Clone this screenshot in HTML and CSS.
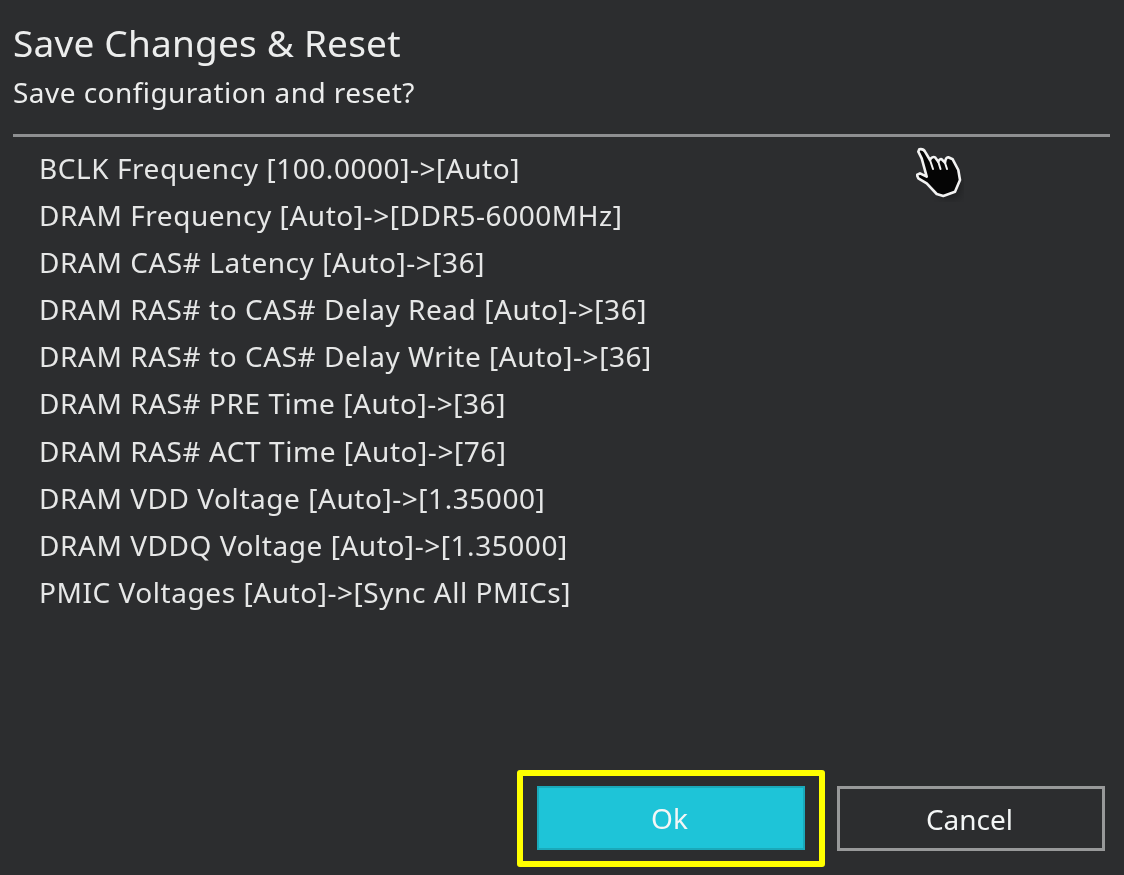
FILE: index.html
```html
<!DOCTYPE html>
<html lang="en">
<head>
<meta charset="utf-8">
<title>Save Changes &amp; Reset</title>
<link rel="stylesheet" href="styles.css">
</head>
<body>
<main class="dialog">
  <header class="head">
    <h1 class="title">Save Changes &amp; Reset</h1>
    <p class="subtitle">Save configuration and reset?</p>
  </header>
  <ul class="changes">
    <li>BCLK Frequency [100.0000]-&gt;[Auto]</li>
    <li>DRAM Frequency [Auto]-&gt;[DDR5-6000MHz]</li>
    <li>DRAM CAS# Latency [Auto]-&gt;[36]</li>
    <li>DRAM RAS# to CAS# Delay Read [Auto]-&gt;[36]</li>
    <li>DRAM RAS# to CAS# Delay Write [Auto]-&gt;[36]</li>
    <li>DRAM RAS# PRE Time [Auto]-&gt;[36]</li>
    <li>DRAM RAS# ACT Time [Auto]-&gt;[76]</li>
    <li>DRAM VDD Voltage [Auto]-&gt;[1.35000]</li>
    <li>DRAM VDDQ Voltage [Auto]-&gt;[1.35000]</li>
    <li>PMIC Voltages [Auto]-&gt;[Sync All PMICs]</li>
  </ul>
  <footer class="actions">
    <div class="highlight"><button class="btn btn-ok">Ok</button></div>
    <button class="btn btn-cancel">Cancel</button>
  </footer>
  <svg class="cursor" width="48" height="56" viewBox="0 0 48 56" aria-hidden="true">
    <path class="cursor-shadow" d="M12 24 L26 52 L42 52 L47 34 Z"/>
    <path class="cursor-hand" d="M3.3 3.3 C6 2.8 8 3.8 9 5.7 L14 14 C15 11.5 17.5 10.5 19 11.3 L22.3 15.7 C23 13.5 24.5 12.8 25.7 13.3 L29 16.7 C29.5 12.5 31 11 32.3 11.3 L36.7 13.3 L42.3 24 L44 34 L39 45.7 L27.3 50 L20.7 48 L10.7 37.3 L2.3 32.3 L0.9 29 L4 27.3 L10.7 30.7 L5.7 12.3 L2.3 5.7 Z"/>
    <path class="cursor-line" d="M14 14 L17 23 M22.3 15.7 L24.5 23 M29 16.7 L31 23"/>
  </svg>
</main>
</body>
</html>
```
FILE: styles.css
```css
* { box-sizing: border-box; }
html, body { margin: 0; height: 100%; }
body {
  background: #2c2d2f;
  color: #eceded;
  font-family: "Noto Sans", "Open Sans", sans-serif;
}
.dialog {
  position: relative;
  width: 1124px;
  height: 875px;
  padding: 20px 14px 8px 13px;
  display: flex;
  flex-direction: column;
  overflow: hidden;
  filter: blur(0.5px);
}
.head {
  border-bottom: 3px solid #8e8f91;
  height: 117px;
}
.title {
  margin: 0;
  font-size: 37px;
  font-weight: 400;
  line-height: 46px;
  letter-spacing: 0.2px;
}
.subtitle {
  margin: 3px 0 0;
  font-size: 28px;
  line-height: 46px;
  letter-spacing: 0.45px;
}
.changes {
  list-style: none;
  margin: 8px 0 0;
  padding: 0 0 0 26px;
  flex: 1;
  font-size: 28px;
  line-height: 47.1px;
  letter-spacing: 0.55px;
  color: #e6e7e7;
}
.actions {
  display: flex;
  justify-content: flex-end;
  align-items: center;
  gap: 12px;
  padding-right: 5px;
}
.highlight {
  border: 6px solid #ffff00;
  border-radius: 3px;
  padding: 10px 14px 11px;
  width: 308px;
  height: 97px;
}
.btn {
  display: block;
  width: 268px;
  height: 64px;
  font: inherit;
  font-size: 28px;
  color: #f4f6f6;
  padding: 0 3px 0 0;
}
.btn-ok {
  background: #1ec4d8;
  border: 2px solid #1aa9ba;
}
.btn-cancel {
  background: transparent;
  border: 3px solid #98999a;
  height: 65px;
}
.cursor {
  position: absolute;
  left: 916px;
  top: 146px;
}
.cursor-shadow { fill: #000; opacity: 0.3; filter: blur(4px); }
.cursor-hand { fill: #050505; stroke: #f2f2f2; stroke-width: 2.6; stroke-linejoin: round; }
.cursor-line { fill: none; stroke: #f2f2f2; stroke-width: 2; stroke-linecap: round; }
```
